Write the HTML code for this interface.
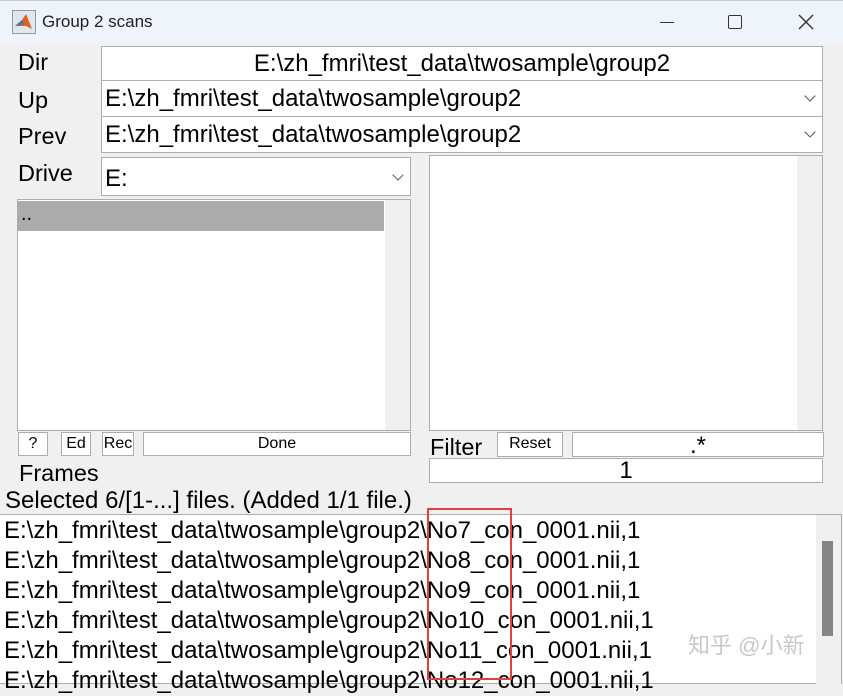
<!DOCTYPE html>
<html><head><meta charset="utf-8"><style>
*{box-sizing:border-box;margin:0;padding:0}
body{width:843px;height:676px;overflow:hidden;background:#f0f0f0;font-family:"Liberation Sans",sans-serif;position:relative;color:#000}
.a{position:absolute}
.box{position:absolute;background:#fff;border:1px solid #adadad}
.lbl{position:absolute;font-size:23.5px;line-height:26px}
.t{font-size:24px;white-space:nowrap;position:absolute;line-height:26px}
.btn{position:absolute;background:#fff;border:1px solid #adadad;font-size:16px;text-align:center;line-height:22px}
.chev{position:absolute;width:8px;height:8px;border-right:1px solid #555;border-bottom:1px solid #555;transform:rotate(45deg)}
.row{position:absolute;left:4px;font-size:24px;white-space:nowrap;line-height:30px}
</style></head><body>
<div class="a" style="left:0;top:0;width:843px;height:44px;background:#eef4f9;border-top:1px solid #ccc"></div>
<svg class="a" style="left:12px;top:10px" width="24" height="24" viewBox="0 0 24 24"><rect x="0.5" y="0.5" width="23" height="23" fill="#dfe6ee" stroke="#999"/><path d="M3 16 L10 10 L14 4 L20 19 L14 16 Z" fill="#e06020"/><path d="M3 16 L10 10 L12 14 Z" fill="#3a78b8"/></svg>
<div class="a" style="left:42px;top:12px;font-size:17px;color:#222">Group 2 scans</div>
<div class="a" style="left:660px;top:22px;width:14px;height:1px;background:#333"></div>
<div class="a" style="left:728px;top:15px;width:14px;height:14px;border:1.5px solid #333;border-radius:2px"></div>
<svg class="a" style="left:798px;top:14px" width="16" height="16"><path d="M1 1L15 15M15 1L1 15" stroke="#333" stroke-width="1.4"/></svg>

<div class="lbl" style="left:18px;top:49px">Dir</div>
<div class="lbl" style="left:18px;top:87px">Up</div>
<div class="lbl" style="left:18px;top:123px">Prev</div>
<div class="lbl" style="left:18px;top:160px">Drive</div>

<div class="box" style="left:101px;top:46px;width:722px;height:35px"><div class="t" style="left:0;right:0;top:4px;text-align:center">E:\zh_fmri\test_data\twosample\group2</div></div>
<div class="box" style="left:101px;top:80px;width:722px;height:37px"><div class="t" style="left:3px;top:5px">E:\zh_fmri\test_data\twosample\group2</div><div class="chev" style="left:704px;top:11px"></div></div>
<div class="box" style="left:101px;top:116px;width:722px;height:37px"><div class="t" style="left:3px;top:5px">E:\zh_fmri\test_data\twosample\group2</div><div class="chev" style="left:704px;top:11px"></div></div>
<div class="box" style="left:101px;top:157px;width:310px;height:39px"><div class="t" style="left:3px;top:8px">E:</div><div class="chev" style="left:292px;top:13px"></div></div>

<div class="box" style="left:17px;top:199px;width:394px;height:232px">
 <div class="a" style="left:0;top:1px;width:366px;height:30px;background:#ababab"><div class="a" style="left:3px;top:2px;font-size:20px">..</div></div>
 <div class="a" style="left:367px;top:0;width:25px;height:230px;background:#f0f0f0"></div>
</div>
<div class="box" style="left:429px;top:155px;width:394px;height:276px">
 <div class="a" style="left:367px;top:0;width:25px;height:274px;background:#f0f0f0"></div>
</div>

<div class="btn" style="left:18px;top:432px;width:30px;height:24px">?</div>
<div class="btn" style="left:61px;top:432px;width:30px;height:24px">Ed</div>
<div class="btn" style="left:102px;top:432px;width:32px;height:24px">Rec</div>
<div class="btn" style="left:143px;top:432px;width:268px;height:24px">Done</div>
<div class="lbl" style="left:430px;top:434px">Filter</div>
<div class="btn" style="left:497px;top:432px;width:66px;height:25px">Reset</div>
<div class="box" style="left:572px;top:432px;width:252px;height:25px"><div class="t" style="left:0;right:0;top:0;text-align:center">.*</div></div>
<div class="lbl" style="left:19px;top:460px">Frames</div>
<div class="box" style="left:429px;top:458px;width:394px;height:25px"><div class="t" style="left:0;right:0;top:-1px;text-align:center">1</div></div>
<div class="lbl" style="left:5px;top:488px;font-size:24px">Selected 6/[1-...] files. (Added 1/1 file.)</div>

<div class="box" style="left:0;top:514px;width:842px;height:170px;border-left:none">
 <div class="a" style="left:816px;top:0;width:25px;height:170px;background:#f0f0f0"></div>
 <div class="a" style="left:822px;top:26px;width:11px;height:95px;background:#858585"></div>
</div>
<div class="row" style="top:516px">E:\zh_fmri\test_data\twosample\group2\No7_con_0001.nii,1</div>
<div class="row" style="top:546px">E:\zh_fmri\test_data\twosample\group2\No8_con_0001.nii,1</div>
<div class="row" style="top:576px">E:\zh_fmri\test_data\twosample\group2\No9_con_0001.nii,1</div>
<div class="row" style="top:606px">E:\zh_fmri\test_data\twosample\group2\No10_con_0001.nii,1</div>
<div class="row" style="top:636px">E:\zh_fmri\test_data\twosample\group2\No11_con_0001.nii,1</div>
<div class="row" style="top:666px">E:\zh_fmri\test_data\twosample\group2\No12_con_0001.nii,1</div>
<div class="a" style="left:688px;top:628px;font-size:22px;color:#c8c8c8;font-family:'Liberation Sans','Noto Sans CJK SC',sans-serif">知乎 @小新</div>
<div class="a" style="left:427px;top:508px;width:85px;height:172px;border:2px solid #e04040"></div>
</body></html>
